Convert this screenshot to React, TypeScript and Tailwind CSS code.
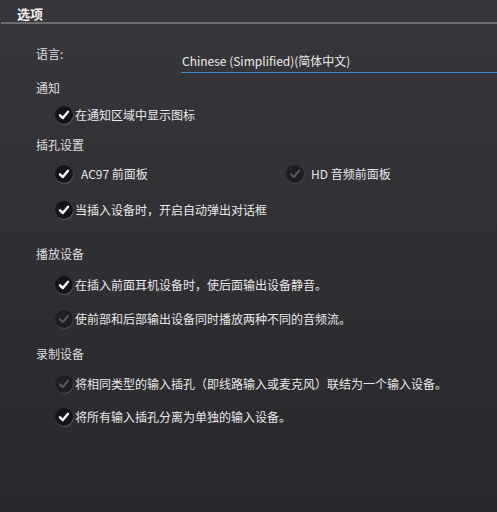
import React from "react";

const font = { fontFamily: '"Noto Sans CJK SC", "Noto Sans", sans-serif' };

function Check({ on }: { on: boolean }) {
  return (
    <span
      className={
        "flex h-[18px] w-[18px] shrink-0 items-center justify-center rounded-full " +
        (on
          ? "bg-[#141317] shadow-[0.5px_1px_1px_#5e5d62]"
          : "bg-[#1f1e22] shadow-[0.5px_1px_1px_#4c4b50]")
      }
    >
      <svg width="12" height="12" viewBox="0 0 11 11">
        <path
          d="M1.8 5.8 L4.4 8.3 L9.2 2.6"
          fill="none"
          stroke={on ? "#ffffff" : "#5a595e"}
          strokeWidth={on ? 2.2 : 1.8}
          strokeLinecap="round"
          strokeLinejoin="round"
        />
      </svg>
    </span>
  );
}

function Row({ on, text, mt }: { on: boolean; text: string; mt: string }) {
  return (
    <div className={"flex h-4 items-center gap-[2px] pl-[55px] leading-4 " + mt}>
      <Check on={on} />
      <span className="text-[12px] leading-4 text-[#e8e8e8]">{text}</span>
    </div>
  );
}

function Heading({ text, mt }: { text: string; mt: string }) {
  return <div className={"h-4 pl-[36px] text-[12px] leading-4 text-[#dedede] " + mt}>{text}</div>;
}

export default function App() {
  return (
    <div
      className="flex h-[512px] w-[497px] flex-col bg-gradient-to-b from-[#37363b] to-[#29282d]"
      style={font}
    >
      <div className="mt-[6px] h-4 pl-[17px] text-[13px] font-bold leading-4 text-[#f2f2f2]">选项</div>
      <div className="ml-[1px] h-[2px] bg-[#6d6c71]" />

      <div className="mt-[22px] flex items-start leading-4">
        <div className="h-4 w-[181px] pl-[36px] text-[12px] leading-4 text-[#dedede]">语言:</div>
        <div className="mt-[7px] h-[20px] flex-1 border-b border-[#3a8fc9] pl-[1px] text-[12px] leading-4 text-[#ececec]">
          Chinese (Simplified)(简体中文)
        </div>
      </div>

      <Heading text="通知" mt="mt-[7px]" />
      <Row on text="在通知区域中显示图标" mt="mt-[11px]" />

      <Heading text="插孔设置" mt="mt-[14px]" />
      <div className="mt-[13px] flex h-4 items-center leading-4">
        <div className="flex w-[286px] items-center gap-[8px] pl-[55px]">
          <Check on />
          <span className="text-[12px] leading-4 text-[#e8e8e8]">AC97 前面板</span>
        </div>
        <div className="flex items-center gap-[7px]">
          <Check on={false} />
          <span className="text-[12px] leading-4 text-[#e8e8e8]">HD 音频前面板</span>
        </div>
      </div>
      <Row on text="当插入设备时，开启自动弹出对话框" mt="mt-[20px]" />

      <Heading text="播放设备" mt="mt-[28px]" />
      <Row on text="在插入前面耳机设备时，使后面输出设备静音。" mt="mt-[15px]" />
      <Row on={false} text="使前部和后部输出设备同时播放两种不同的音频流。" mt="mt-[18px]" />

      <Heading text="录制设备" mt="mt-[19px]" />
      <Row on={false} text="将相同类型的输入插孔（即线路输入或麦克风）联结为一个输入设备。" mt="mt-[14px]" />
      <Row on text="将所有输入插孔分离为单独的输入设备。" mt="mt-[17px]" />
    </div>
  );
}
